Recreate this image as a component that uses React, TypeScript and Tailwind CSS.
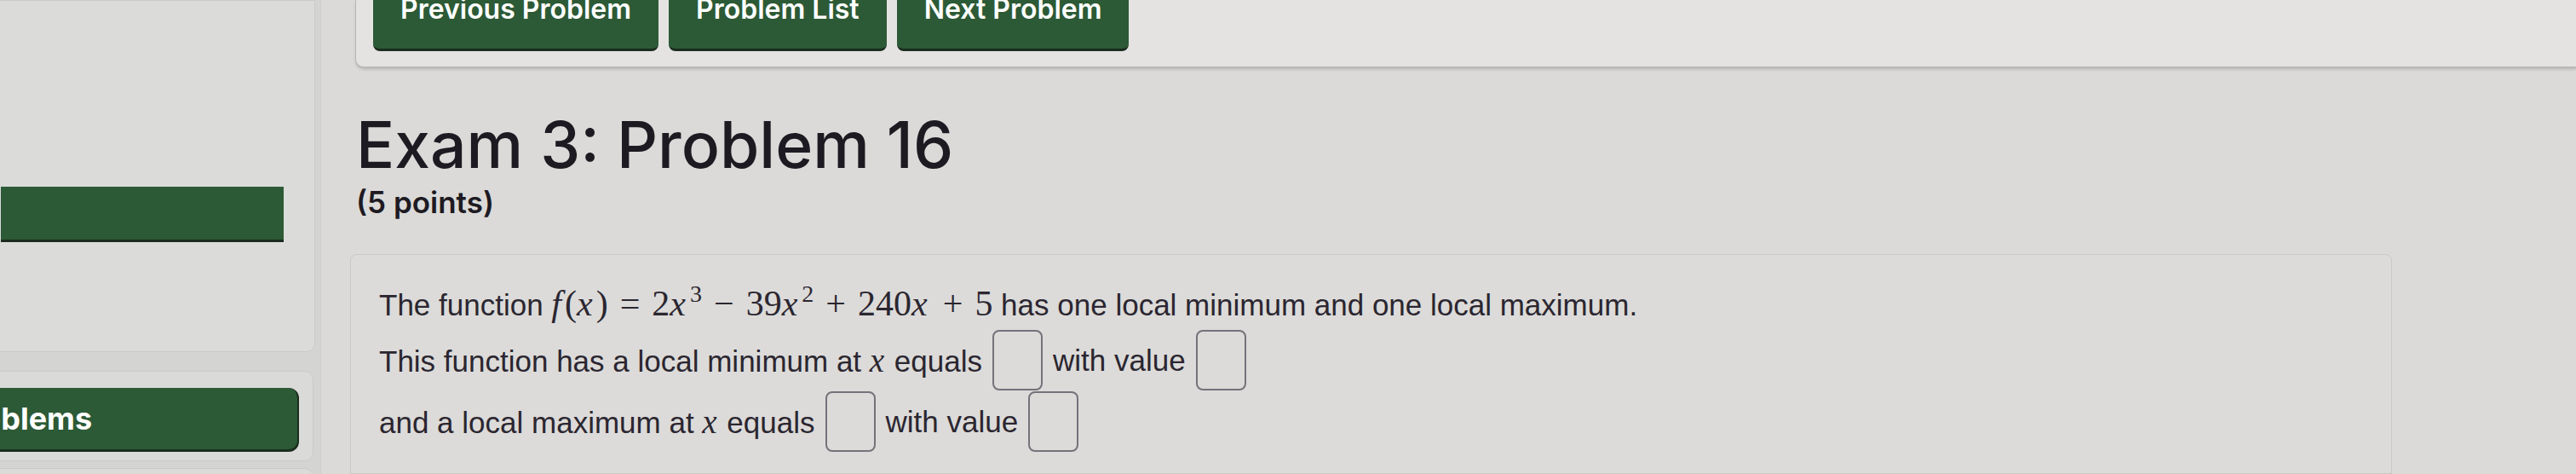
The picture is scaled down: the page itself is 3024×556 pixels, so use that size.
import React from "react";

const sans = "font-['Liberation_Sans',Arial,sans-serif]";
const ui = "font-['Inter','Liberation_Sans',sans-serif]";

function AnswerBox() {
  return (
    <span className="inline-block w-[59px] h-[71px] shrink-0 rounded-[8px] border-2 border-[#75727a] bg-[#dcdbd9]" />
  );
}

function Op({ children }: { children: React.ReactNode }) {
  return <span className="mx-[14px] not-italic">{children}</span>;
}

function V({ children }: { children: React.ReactNode }) {
  return <i className="mr-[4px]">{children}</i>;
}

function Sup({ children }: { children: React.ReactNode }) {
  return <sup className="text-[28px] -top-[16px] ml-[1px]">{children}</sup>;
}

function MathX() {
  return (
    <span className="font-['Liberation_Serif',serif] italic text-[39px] mr-[2px]">
      x
    </span>
  );
}

function Formula() {
  return (
    <span className="font-['Liberation_Serif',serif] text-[42px] leading-none">
      <V>f</V>(<V>x</V>)
      <Op>=</Op>
      2<V>x</V>
      <Sup>3</Sup>
      <Op>−</Op>
      39<V>x</V>
      <Sup>2</Sup>
      <Op>+</Op>
      240<V>x</V>
      <Op>+</Op>
      5
    </span>
  );
}

function Sidebar() {
  return (
    <div className="w-[377px] shrink-0 bg-[#d4d4d2] border-r border-[#cfcfcd] overflow-hidden flex flex-col">
      <div className="shrink-0 -ml-[12px] w-[382px] h-[413px] rounded-br-[10px] border border-[#cacac8] bg-[#dbdbd9] flex flex-col">
        <div className="mt-[218px] ml-[12px] w-[332px] h-[65px] bg-[#2c5a36] border-b-[3px] border-[#1b2c1f]" />
      </div>
      <div className="shrink-0 -ml-[12px] mt-[22px] w-[380px] h-[106px] rounded-r-[10px] border border-[#cacac8] bg-[#dadad8] pt-[19px]">
        <div
          className={`w-[362px] h-[75px] rounded-r-[12px] bg-[#2c5a36] border-b-[3px] border-r-2 border-[#1b2c1f] flex items-center overflow-hidden ${ui}`}
        >
          <span className="-ml-[47px] text-[36px] font-bold text-white">
            Problems
          </span>
        </div>
      </div>
      <div className="shrink-0 -ml-[12px] mt-[8px] w-[380px] h-[40px] rounded-tr-[10px] border border-[#cacac8] bg-[#dadad8]" />
    </div>
  );
}

function NavBar() {
  const buttons = ["Previous Problem", "Problem List", "Next Problem"];
  return (
    <div className="shrink-0 ml-[40px] h-[80px] rounded-bl-[10px] bg-[#e4e3e1] border-b-2 border-l border-[#b9b8b6] shadow-[0_2px_3px_rgba(0,0,0,0.12)] pl-[20px] flex gap-[12px] items-start">
      {buttons.map((b) => (
        <div
          key={b}
          className={`h-[60px] px-[32px] rounded-b-[8px] bg-[#2c5a36] border-b-[3px] border-[#1b2c1f] text-white text-[32px] font-semibold leading-[30px] ${ui}`}
        >
          <span className="block -mt-[4px]">{b}</span>
        </div>
      ))}
    </div>
  );
}

export default function App() {
  return (
    <div className="w-[3024px] h-[556px] overflow-hidden bg-[#dbdad8] flex">
      <Sidebar />
      <div className="flex-1 flex flex-col">
        <NavBar />
        <h1
          className={`shrink-0 ml-[41px] mt-[52px] text-[75px] leading-[75px] font-medium text-[#1e1a22] ${ui}`}
        >
          Exam 3: Problem 16
        </h1>
        <div
          className={`shrink-0 ml-[41px] mt-[13px] text-[35px] leading-[35px] font-semibold text-[#1e1a22] ${ui}`}
        >
          (5 points)
        </div>
        <div
          className={`ml-[34px] mt-[43px] w-[2397px] flex-1 rounded-t-[8px] border border-[#c9c9c7] bg-[#dcdbd9] pt-[31px] pl-[33px] text-[35px] text-[#2b2630] ${sans}`}
        >
          <div className="h-[52px] flex items-center">
            <span className="leading-none whitespace-nowrap">
              The function <Formula /> has one local minimum and one local
              maximum.
            </span>
          </div>
          <div className="mt-[4px] h-[72px] flex items-center gap-[12px]">
            <span className="leading-none whitespace-nowrap">
              This function has a local minimum at <MathX /> equals
            </span>
            <AnswerBox />
            <span className="leading-none">with value</span>
            <AnswerBox />
          </div>
          <div className="h-[72px] flex items-center gap-[12px]">
            <span className="leading-none whitespace-nowrap">
              and a local maximum at <MathX /> equals
            </span>
            <AnswerBox />
            <span className="leading-none">with value</span>
            <AnswerBox />
          </div>
        </div>
      </div>
    </div>
  );
}
